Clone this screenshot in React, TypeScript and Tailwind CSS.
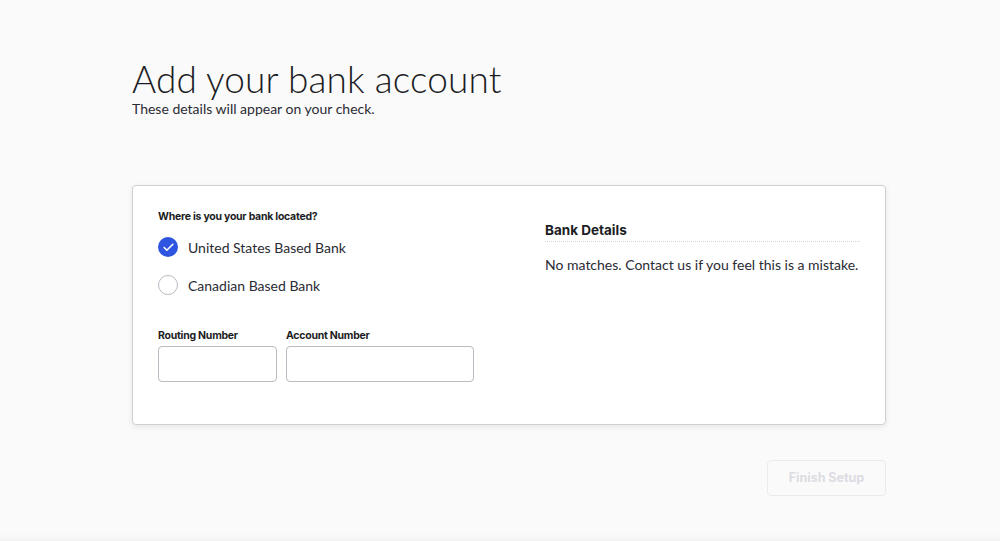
import { Check } from "lucide-react";

export default function App() {
  return (
    <div className="min-h-[541px] bg-[#fafafa] font-['Lato',sans-serif] text-[#1c1d24]">
      <div className="pl-[132px] pr-[114px] pt-[57px]">
        <h1 className="text-[37px] font-light leading-[44px] tracking-[0.1px]">Add your bank account</h1>
        <p className="text-[14px] leading-[16px] text-[#2a2b33]">These details will appear on your check.</p>

        <div className="mt-[68px] h-[240px] rounded-[4px] border border-[#cfd0d6] bg-white px-[25px] pt-[24px] shadow-[0_2px_6px_rgba(0,0,0,0.08)]">
          <div className="flex">
            <div className="w-[387px]">
              <div className="font-['Inter',sans-serif] text-[10.5px] font-bold leading-[14px] tracking-[-0.25px]">Where is you your bank located?</div>
              <div className="mt-[13px] flex h-[20px] items-center gap-[10px]">
                <span className="flex h-[20px] w-[20px] items-center justify-center rounded-full bg-[#2d55e0]">
                  <Check className="h-[13px] w-[13px] text-white" strokeWidth={3} />
                </span>
                <span className="text-[14px] text-[#2a2b33]">United States Based Bank</span>
              </div>
              <div className="mt-[18px] flex h-[20px] items-center gap-[10px]">
                <span className="h-[20px] w-[20px] rounded-full border border-[#b9bac2] bg-white" />
                <span className="text-[14px] text-[#2a2b33]">Canadian Based Bank</span>
              </div>
              <div className="mt-[34px] flex gap-[9px]">
                <div>
                  <div className="font-['Inter',sans-serif] text-[10.5px] font-bold leading-[14px] tracking-[-0.25px]">Routing Number</div>
                  <div className="mt-[3px] h-[36px] w-[119px] rounded-[4px] border border-[#b9bac2] bg-white" />
                </div>
                <div>
                  <div className="font-['Inter',sans-serif] text-[10.5px] font-bold leading-[14px] tracking-[-0.25px]">Account Number</div>
                  <div className="mt-[3px] h-[36px] w-[188px] rounded-[4px] border border-[#b9bac2] bg-white" />
                </div>
              </div>
            </div>
            <div className="w-[315px] pt-[11px]">
              <div className="border-b border-dotted border-[#d4d5da] pb-[2px] font-['Inter',sans-serif] text-[13.5px] font-bold leading-[18px]">Bank Details</div>
              <p className="mt-[14px] text-[14px] leading-[18px] text-[#2a2b33]">No matches. Contact us if you feel this is a mistake.</p>
            </div>
          </div>
        </div>

        <div className="mt-[35px] flex justify-end">
          <button className="h-[36px] w-[119px] rounded-[4px] border border-[#ebebef] bg-[#fafafa] font-['Inter',sans-serif] text-[12.5px] font-bold text-[#dcdce2]">
            Finish Setup
          </button>
        </div>
      </div>
      <div className="mt-[37px] h-[8px] bg-gradient-to-b from-[#fafafa] to-[#f3f3f3]" />
    </div>
  );
}
